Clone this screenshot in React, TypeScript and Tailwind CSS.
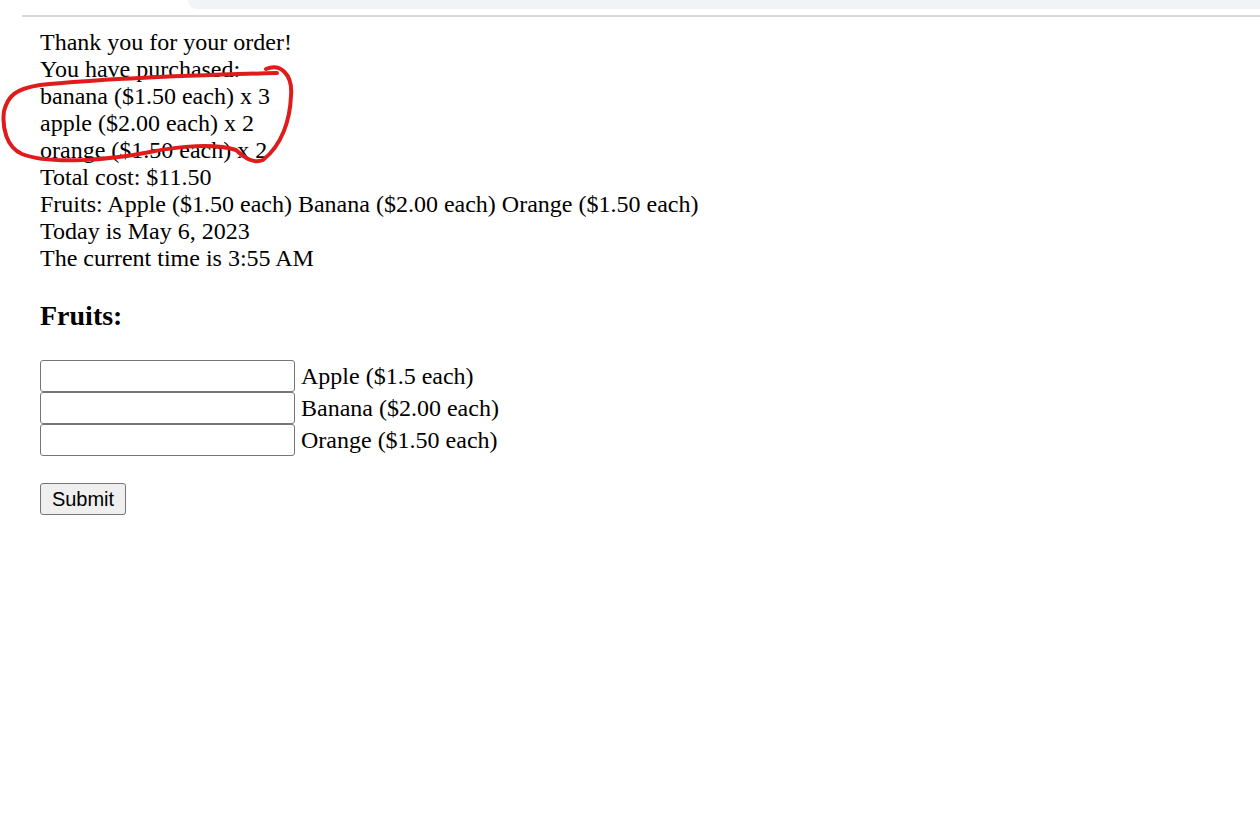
import React from 'react';

const lines = [
  'Thank you for your order!',
  'You have purchased:',
  'banana ($1.50 each) x 3',
  'apple ($2.00 each) x 2',
  'orange ($1.50 each) x 2',
  'Total cost: $11.50',
  'Fruits: Apple ($1.50 each) Banana ($2.00 each) Orange ($1.50 each)',
  'Today is May 6, 2023',
  'The current time is 3:55 AM',
];

const fruits = ['Apple ($1.5 each)', 'Banana ($2.00 each)', 'Orange ($1.50 each)'];

const App: React.FC = () => {
  return (
    <div className="relative min-h-[832px] bg-white text-black font-['Liberation_Serif','Times_New_Roman',serif]">
      {/* browser chrome remnants */}
      <div className="pl-[188px]">
        <div className="h-[9px] bg-[#f1f3f4] rounded-bl-[22px]" />
      </div>
      <div className="mt-[6px] ml-[22px] h-[2px] bg-[#dadada]" />

      <div className="px-[40px] pt-[12px]">
        <div className="text-[24px] leading-[27px]">
          {lines.map((l, i) => (
            <div key={i}>{l}</div>
          ))}
        </div>

        <h3 className="mt-[27px] text-[28px] leading-[34px] font-bold">Fruits:</h3>

        <form className="mt-[27px]" onSubmit={(e) => e.preventDefault()}>
          {fruits.map((f) => (
            <div key={f} className="flex items-center h-[32px]">
              <input
                type="text"
                className="w-[255px] h-[32px] border border-[#767676] rounded-[3px] bg-white"
              />
              <span className="ml-[6px] text-[24px] leading-[27px]">{f}</span>
            </div>
          ))}
          <button
            type="submit"
            className="mt-[27px] w-[86px] h-[32px] border border-[#767676] rounded-[3px] bg-[#efefef] text-[20px] font-['Liberation_Sans',Arial,sans-serif] text-black"
          >
            Submit
          </button>
        </form>
      </div>

      {/* red hand-drawn annotation */}
      <svg className="absolute left-0 top-0 pointer-events-none" width="310" height="175" viewBox="0 0 310 175" fill="none">
        <path
          d="M 266 69 C 280 63, 293 74, 291 96 C 290 120, 282 145, 263 160 C 253 164, 245 158, 236 150 C 215 143, 180 146, 150 152 C 110 160, 50 165, 22 154 C 6 147, 2 127, 4 111 C 8 96, 15 89, 40 85 C 100 79, 200 75, 277 73"
          stroke="#e01b1b"
          strokeWidth="4"
          strokeLinecap="round"
          strokeLinejoin="round"
        />
      </svg>
    </div>
  );
};

export default App;
